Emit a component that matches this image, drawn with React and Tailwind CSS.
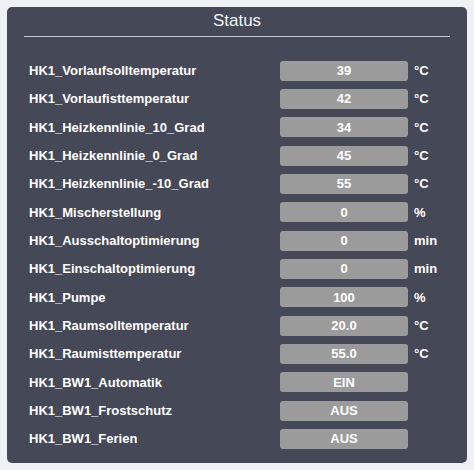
import React from 'react';

const rows = [
  ['HK1_Vorlaufsolltemperatur', '39', '°C'],
  ['HK1_Vorlaufisttemperatur', '42', '°C'],
  ['HK1_Heizkennlinie_10_Grad', '34', '°C'],
  ['HK1_Heizkennlinie_0_Grad', '45', '°C'],
  ['HK1_Heizkennlinie_-10_Grad', '55', '°C'],
  ['HK1_Mischerstellung', '0', '%'],
  ['HK1_Ausschaltoptimierung', '0', 'min'],
  ['HK1_Einschaltoptimierung', '0', 'min'],
  ['HK1_Pumpe', '100', '%'],
  ['HK1_Raumsolltemperatur', '20.0', '°C'],
  ['HK1_Raumisttemperatur', '55.0', '°C'],
  ['HK1_BW1_Automatik', 'EIN', ''],
  ['HK1_BW1_Frostschutz', 'AUS', ''],
  ['HK1_BW1_Ferien', 'AUS', ''],
];

const App = () => {
  return (
    <div className="w-[474px] h-[470px] bg-[#eef1f4] p-[7px] font-['Liberation_Sans',Arial,sans-serif]">
      <div className="w-[460px] h-[456px] bg-[#454856] rounded-[5px] text-white">
        <div className="mx-[17px] h-[30px] border-b border-[#c9cbd2] flex items-center justify-center">
          <span className="text-[17px] leading-none text-[#f2f2f4] mt-[-2px]">Status</span>
        </div>
        <div className="mt-[19.5px] pl-[22px]">
          {rows.map(([label, value, unit]) => (
            <div key={label} className="h-[28.33px] grid grid-cols-[251px_128px_auto] items-center">
              <span className="text-[13px] font-bold leading-none">{label}</span>
              <div className="h-[20px] bg-[#9b9b9b] rounded-[3px] flex items-center justify-center text-[13px] font-bold leading-none">
                {value}
              </div>
              <span className="pl-[6px] text-[13px] font-bold leading-none">{unit}</span>
            </div>
          ))}
        </div>
      </div>
    </div>
  );
};

export default App;
